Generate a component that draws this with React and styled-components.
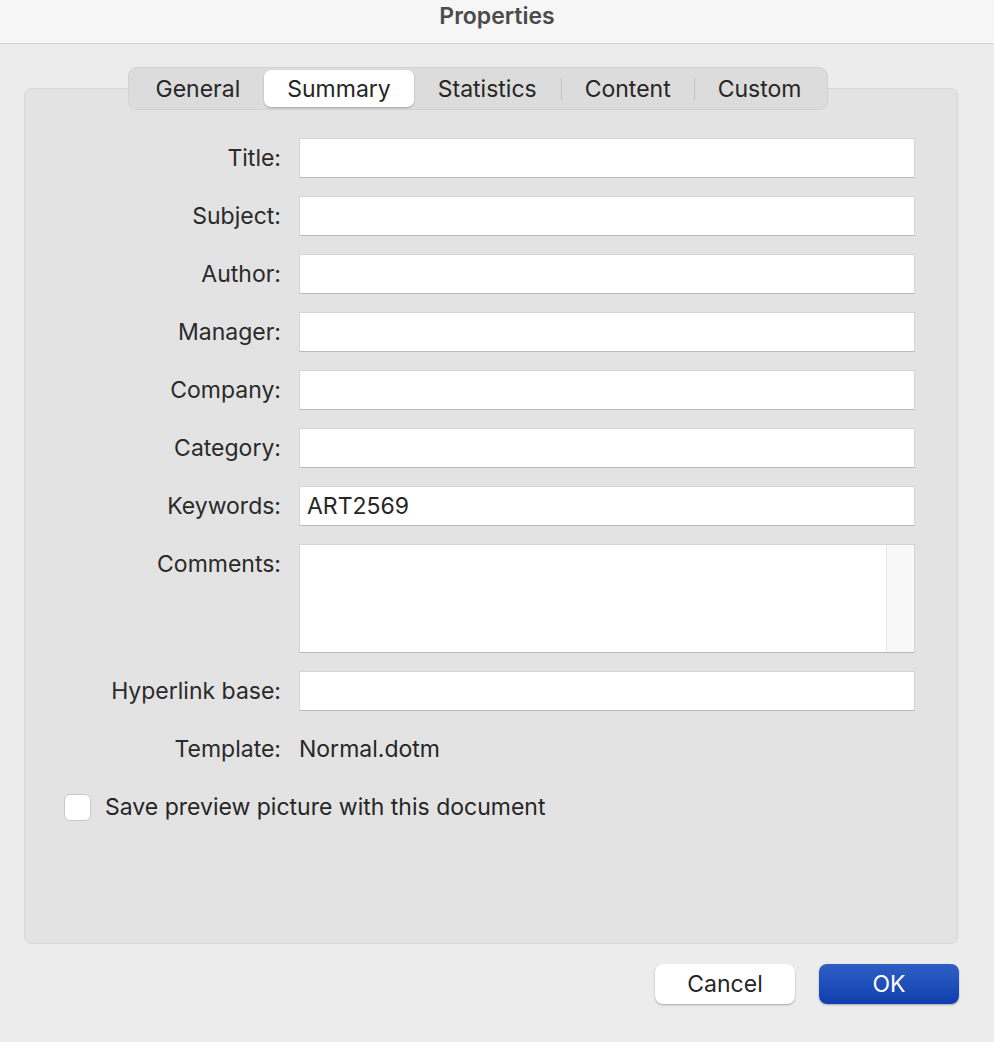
import React from "react";
import styled, { createGlobalStyle } from "styled-components";

const Global = createGlobalStyle`
  html, body { margin: 0; padding: 0; background: #ececec; }
  body { font-family: "Inter", "Liberation Sans", sans-serif; color: #262626; }
`;

const Window = styled.div`
  width: 994px; height: 1042px; background: #ececec; display: flex; flex-direction: column;
`;
const TitleBar = styled.div`
  height: 44px; background: #f6f6f6; border-bottom: 1px solid #d2d2d2; box-sizing: border-box;
  display: flex; align-items: flex-start; justify-content: center;
  font-size: 23px; font-weight: 600; color: #4b4b4b; padding-top: 2px;
`;
const Body = styled.div`
  padding: 23px 36px 0 24px; display: flex; flex-direction: column;
`;
const TabsWrap = styled.div`
  display: flex; justify-content: center; margin-bottom: -22px; margin-left: -26px; position: relative; z-index: 1;
`;
const Tabs = styled.div`
  display: flex; align-items: center; height: 43px; background: #dcdcdc; border: 1px solid #d2d2d2;
  border-radius: 9px; padding: 0 3px; box-sizing: border-box;
`;
const Tab = styled.div`
  height: 37px; display: flex; align-items: center; padding: 0 ${p => p.$pad}px; font-size: 23px;
  border-radius: 7px; color: #262626; position: relative;
  background: ${p => (p.$active ? "#fff" : "transparent")};
  box-shadow: ${p => (p.$active ? "0 1px 2px rgba(0,0,0,0.25)" : "none")};
`;
const Sep = styled.div`
  width: 1px; height: 22px; background: #c4c4c4;
`;
const Panel = styled.div`
  height: 856px; box-sizing: border-box; background: #e3e3e3; border: 1px solid #d6d6d6; border-radius: 8px;
  padding: 49px 42px 0 0; display: grid; grid-template-columns: 256px 1fr; column-gap: 18px; row-gap: 18px;
  align-content: start;
`;
const Label = styled.div`
  font-size: 23px; text-align: right; height: 40px; line-height: 40px; color: #2a2a2a;
  ${p => p.$top && "line-height: 40px; align-self: start;"}
`;
const Field = styled.div`
  height: ${p => p.$h || 40}px; background: #fff; box-sizing: border-box;
  border: 1px solid #d4d4d4; border-bottom-color: #b9b9b9;
  font-size: 23px; line-height: 38px; padding: 0 7px; display: flex;
`;
const AreaText = styled.div`flex: 1;`;
const Scroll = styled.div`
  width: 27px; margin-right: -7px; background: #f8f8f8; border-left: 1px solid #e6e6e6;
`;
const Value = styled.div`
  font-size: 23px; height: 40px; line-height: 40px;
`;
const CheckRow = styled.div`
  grid-column: 1 / 3; display: flex; align-items: center; gap: 14px; height: 40px; padding-left: 39px;
  font-size: 23px;
`;
const Box = styled.div`
  width: 27px; height: 27px; border-radius: 6px; background: #fff; border: 1px solid #c9c9c9; box-sizing: border-box;
`;
const Buttons = styled.div`
  display: flex; justify-content: flex-end; gap: 24px; margin-top: 20px; margin-right: -1px;
`;
const Button = styled.div`
  width: 140px; height: 40px; border-radius: 8px; display: flex; align-items: center; justify-content: center;
  font-size: 23px; box-sizing: border-box;
  background: ${p => (p.$primary ? "linear-gradient(#2f5fc4, #0f3faf)" : "#fff")};
  color: ${p => (p.$primary ? "#fff" : "#262626")};
  box-shadow: 0 1px 2px rgba(0,0,0,0.3);
`;

const fields = ["Title", "Subject", "Author", "Manager", "Company", "Category"];

export default function App() {
  return (
    <Window>
      <Global />
      <TitleBar>Properties</TitleBar>
      <Body>
        <TabsWrap>
          <Tabs>
            <Tab $pad={24}>General</Tab>
            <Tab $active $pad={23}>Summary</Tab>
            <Tab $pad={24}>Statistics</Tab>
            <Sep />
            <Tab $pad={23}>Content</Tab>
            <Sep />
            <Tab $pad={23}>Custom</Tab>
          </Tabs>
        </TabsWrap>
        <Panel>
          {fields.map(f => (
            <React.Fragment key={f}>
              <Label>{f}:</Label>
              <Field />
            </React.Fragment>
          ))}
          <Label>Keywords:</Label>
          <Field>ART2569</Field>
          <Label $top>Comments:</Label>
          <Field $h={109}><AreaText /><Scroll /></Field>
          <Label>Hyperlink base:</Label>
          <Field />
          <Label>Template:</Label>
          <Value>Normal.dotm</Value>
          <CheckRow><Box />Save preview picture with this document</CheckRow>
        </Panel>
        <Buttons>
          <Button>Cancel</Button>
          <Button $primary>OK</Button>
        </Buttons>
      </Body>
    </Window>
  );
}
